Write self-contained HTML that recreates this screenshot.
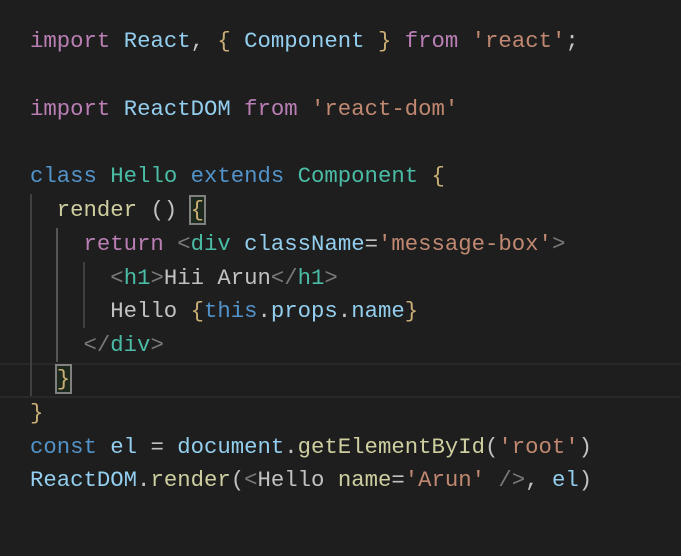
<!DOCTYPE html>
<html><head><style>
body{margin:0;background:#1e1e1e;width:681px;height:556px;overflow:hidden;position:relative}
.code{position:absolute;left:30px;top:25px;font-family:"Liberation Mono",monospace;font-size:22.3px;line-height:33.8px;color:#cfcfcf;white-space:pre;opacity:.93}
.k{color:#c586c0}.v{color:#9cdcfe}.s{color:#ce9178}.b{color:#569cd6}.t{color:#4ec9b0}.f{color:#dcdcaa}.y{color:#d7ba7d}.g{color:#808080}
.hl{position:absolute;left:0;right:0;top:363px;height:31px;border-top:2px solid #282828;border-bottom:2px solid #282828}
.guide{position:absolute;width:2px;background:#404040}
.box{outline:2px solid #888;background:#1f2a1f}
</style></head><body>
<div class="hl"></div>
<div class="guide" style="left:30px;top:194px;height:202px"></div>
<div class="guide" style="left:56px;top:228px;height:134px;background:#555"></div>
<div class="guide" style="left:83px;top:262px;height:66px"></div>
<div class="code"><span class="k">import</span> <span class="v">React</span>, <span class="y">{</span> <span class="v">Component</span> <span class="y">}</span> <span class="k">from</span> <span class="s">'react'</span>;

<span class="k">import</span> <span class="v">ReactDOM</span> <span class="k">from</span> <span class="s">'react-dom'</span>

<span class="b">class</span> <span class="t">Hello</span> <span class="b">extends</span> <span class="t">Component</span> <span class="y">{</span>
  <span class="f">render</span> () <span class="y box">{</span>
    <span class="k">return</span> <span class="g">&lt;</span><span class="t">div</span> <span class="v">className</span>=<span class="s">'message-box'</span><span class="g">&gt;</span>
      <span class="g">&lt;</span><span class="t">h1</span><span class="g">&gt;</span>Hii Arun<span class="g">&lt;/</span><span class="t">h1</span><span class="g">&gt;</span>
      Hello <span class="y">{</span><span class="b">this</span>.<span class="v">props</span>.<span class="v">name</span><span class="y">}</span>
    <span class="g">&lt;/</span><span class="t">div</span><span class="g">&gt;</span>
  <span class="y box">}</span>
<span class="y">}</span>
<span class="b">const</span> <span class="v">el</span> = <span class="v">document</span>.<span class="f">getElementById</span>(<span class="s">'root'</span>)
<span class="v">ReactDOM</span>.<span class="f">render</span>(<span class="g">&lt;</span>Hello <span class="f">name</span>=<span class="s">'Arun'</span> <span class="g">/&gt;</span>, <span class="v">el</span>)</div>
</body></html>
